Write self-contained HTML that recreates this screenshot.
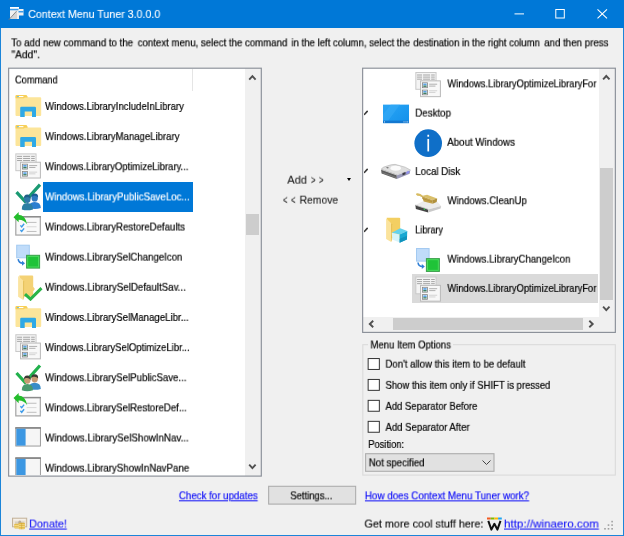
<!DOCTYPE html>
<html>
<head>
<meta charset="utf-8">
<title>Context Menu Tuner 3.0.0.0</title>
<style>
html,body{margin:0;padding:0;}
body{width:624px;height:536px;overflow:hidden;background:#f0f0f0;font-family:"Liberation Sans",sans-serif;font-size:10.500px;color:#000;position:relative;}
.abs{position:absolute;}
#win{position:absolute;left:0;top:0;width:622px;height:534px;border:1px solid #1c85d9;background:#f0f0f0;}
#title{position:absolute;left:0;top:0;width:624px;height:27.900px;background:#0078d7;}
.txt{position:absolute;white-space:nowrap;transform-origin:0 50%;will-change:transform;-webkit-text-stroke:0.2px;}
.list{position:absolute;background:#fff;overflow:hidden;}
.inner{position:absolute;left:0;top:0;right:0;bottom:0;overflow:hidden;}
a{color:#1010f8;text-decoration:underline;}
.cb{position:absolute;width:10.500px;height:10.500px;border:1px solid #333;background:#fff;}
.btn{position:absolute;box-sizing:border-box;border:1px solid #adadad;background:#e1e1e1;}
</style>
</head>
<body>
<div id="win"></div>
<div id="title">
<svg class="abs" style="left:8px;top:6px" width="17" height="16" viewBox="0 0 17 16"><rect x="2" y="1" width="9" height="12" fill="#f1f1f1"/><rect x="2" y="1" width="9" height="1.600" fill="#fff"/><rect x="2" y="2.800" width="9" height="1.500" fill="#3b9ceb"/><rect x="10.500" y="3" width="5" height="6.500" fill="#f1f1f1"/><rect x="10.500" y="5" width="5" height="1.500" fill="#3b9ceb"/><path d="M2 13L9 5V13Z" fill="#d4d4d4"/><path d="M0.800 13.800L8.500 5.200" stroke="#7d7d7d" stroke-width="0.900"/></svg>
<div class="txt" id="t0" style="left:28px;top:7px;font-size:11.2px;line-height:13px;color:#fff;-webkit-text-stroke:0.1px;transform:translate(0.2px,0.92px) scaleX(0.9518);">Context Menu Tuner 3.0.0.0</div>
<svg class="abs" style="left:500px;top:0" width="124" height="28" viewBox="0 0 124 28">
<path d="M14.500 13.900h9.500" stroke="#fff" stroke-width="1"/>
<rect x="55.800" y="9.500" width="8.500" height="8.500" fill="none" stroke="#fff" stroke-width="1"/>
<path d="M97.500 9.300l9.500 9M107 9.300L97.500 18.300" stroke="#fff" stroke-width="1.100"/>
</svg>
</div>

<div class="txt" id="t1" style="left:11px;top:36px;font-size:10.5px;line-height:13px;transform:translate(0.2px,0.36px) scaleX(0.924);">To add new command to the </div><div class="txt" id="t2" style="left:137px;top:36px;font-size:10.5px;line-height:13px;transform:translate(0.7px,0.36px) scaleX(0.9187);">context menu, select the command </div><div class="txt" id="t3" style="left:291px;top:36px;font-size:10.5px;line-height:13px;transform:translate(0.5px,0.36px) scaleX(0.9112);">in the left column, select the </div><div class="txt" id="t4" style="left:413px;top:36px;font-size:10.5px;line-height:13px;transform:translate(0.3px,0.36px) scaleX(0.9068);">destination in the right column </div><div class="txt" id="t5" style="left:544px;top:36px;font-size:10.5px;line-height:13px;transform:translate(0.2px,0.36px) scaleX(0.9242);">and then press</div>
<div class="txt" id="t6" style="left:11px;top:48px;font-size:10.5px;line-height:13px;transform:translate(0.5px,0.26px) scaleX(0.9738);">"Add".</div>

<div class="list" id="left" style="left:9px;top:68px;width:252px;height:408px;">
<div class="inner" style="bottom:1px;right:17px">
<div class="txt" id="t7" style="left:6px;top:5px;font-size:10.5px;line-height:13px;transform:translate(0.0px,0.46px) scaleX(0.8815);">Command</div>
<div class="abs" style="left:183.400px;top:1px;width:1px;height:22px;background:#e5e5e5;"></div>
<div class="abs" style="left:34px;top:113.500px;width:149.600px;height:30px;background:#0078d7;"></div>
<svg class="abs" style="left:6px;top:27px" width="27" height="23" viewBox="-0.2 -0.0 27 23"><path d="M0.300 1.200Q0.300 0 1.500 0H10.500Q12 0 12.200 1.800L12.400 2.300H25Q26 2.300 26 3.300V20Q26 21 25 21H1.300Q0.300 21 0.300 20Z" fill="#fce59a"/><path d="M0.300 1.200Q0.300 0 1.500 0H10.500Q12 0 12.200 1.500L12.400 2.600H9.500L8.800 3.300H0.300Z" fill="#f7cf58"/><rect x="2.600" y="1" width="5.600" height="1.100" fill="#fff"/><rect x="2.200" y="1" width="1.300" height="1.100" fill="#3fb0e8"/><path d="M5 13Q5 11.800 6.200 11.800H19.600Q20.800 11.800 20.800 13V22H16.800V16.600H9.500V22H5Z" fill="#2fa9e6"/></svg>
<div class="txt" id="t8" style="left:36px;top:31px;font-size:10.5px;line-height:13px;transform:translate(0.1px,0.96px) scaleX(0.9112);">Windows.LibraryIncludeInLibrary</div>
<svg class="abs" style="left:6px;top:57px" width="27" height="23" viewBox="-0.2 -0.1 27 23"><path d="M0.300 1.200Q0.300 0 1.500 0H10.500Q12 0 12.200 1.800L12.400 2.300H25Q26 2.300 26 3.300V20Q26 21 25 21H1.300Q0.300 21 0.300 20Z" fill="#fce59a"/><path d="M0.300 1.200Q0.300 0 1.500 0H10.500Q12 0 12.200 1.500L12.400 2.600H9.500L8.800 3.300H0.300Z" fill="#f7cf58"/><rect x="2.600" y="1" width="5.600" height="1.100" fill="#fff"/><rect x="2.200" y="1" width="1.300" height="1.100" fill="#3fb0e8"/><path d="M5 13Q5 11.800 6.200 11.800H19.600Q20.800 11.800 20.800 13V22H16.800V16.600H9.500V22H5Z" fill="#2fa9e6"/></svg>
<div class="txt" id="t9" style="left:36px;top:62px;font-size:10.5px;line-height:13px;transform:translate(0.1px,0.1px) scaleX(0.9095);">Windows.LibraryManageLibrary</div>
<svg class="abs" style="left:6px;top:84px" width="27" height="28" viewBox="-0.3 -0.58 27 28"><rect x="0.550" y="1.300" width="20.200" height="16.800" fill="#f4f4f4" stroke="#c9c9c9"/><g stroke="#a6a6a6" stroke-width="1"><path d="M1.750 3.800h5M7.800 3.800h7M15.850 3.800h3.600M1.750 5.900h5M7.800 5.900h7M15.850 5.900h3.600M1.750 7.950h5M7.800 7.950h7M15.850 7.950h3.600"/></g><rect x="5.250" y="9.650" width="19.850" height="15.800" fill="#f8f8f8" stroke="#b9b9b9"/><rect x="7.200" y="11.600" width="4.900" height="4.900" fill="#f2f6fa" stroke="#858585" stroke-width="0.800"/><rect x="7.200" y="18.900" width="4.900" height="4.700" fill="#f2f6fa" stroke="#858585" stroke-width="0.800"/><rect x="8" y="12.400" width="3.300" height="1.700" fill="#5aa2e6"/><rect x="8" y="14.300" width="3.300" height="1.400" fill="#3f7f62"/><rect x="8" y="19.700" width="3.300" height="1.600" fill="#5aa2e6"/><rect x="8" y="21.500" width="3.300" height="1.300" fill="#3f7f62"/><g stroke-width="0.900"><path d="M13.850 13h8M13.850 14.900h6.300" stroke="#a8a8a8"/><path d="M13.850 19.550h8M13.850 21.250h6.300" stroke="#cfcfcf"/></g></svg>
<div class="txt" id="t10" style="left:36px;top:92px;font-size:10.5px;line-height:13px;transform:translate(0.1px,0.24px) scaleX(0.9006);">Windows.LibraryOptimizeLibrary...</div>
<svg class="abs" style="left:6px;top:113px" width="28" height="32" viewBox="0 -0.82 28 32"><path d="M1.500 10.300L10 19.600L25 2.800" fill="none" stroke="#1a9a72" stroke-width="3.200"/><g transform="translate(0,-1.200)"><path d="M13.800 27.500Q13.800 21.300 19.500 21.300Q25.800 21.300 25.800 27.500Q20 29.300 13.800 27.500Z" fill="#2a7fd0"/><ellipse cx="19.700" cy="17.300" rx="3.200" ry="3.700" fill="#2f79c0"/><path d="M16.300 17Q16.100 12.800 19.800 12.800Q23.400 12.800 23.100 17Q21.500 14.800 18.500 15.300Q16.800 15.500 16.300 17Z" fill="#1c5c96"/><path d="M6.800 28.800Q6.800 22.500 12.300 22.500Q18 22.500 18 28.800Q12 30.600 6.800 28.800Z" fill="#2b7fa3"/><ellipse cx="12.300" cy="18.600" rx="3.200" ry="3.800" fill="#2f79a8"/><path d="M8.900 18.500Q8.600 14 12.300 14Q15.900 14 15.700 18.500Q14 16 11 16.600Q9.500 16.800 8.900 18.500Z" fill="#1f5f86"/></g></svg>
<div class="txt" id="t11" style="left:36px;top:122px;font-size:10.5px;line-height:13px;color:#fff;transform:translate(0.1px,0.38px) scaleX(0.9273);">Windows.LibraryPublicSaveLoc...</div>
<svg class="abs" style="left:4px;top:144px" width="30" height="25" viewBox="0 -0.06 30 25"><rect x="2.800" y="4.600" width="24.500" height="18.400" fill="#f9f9f9" stroke="#a3a3a3" stroke-width="1.200"/><rect x="2.200" y="4" width="25.700" height="1.400" fill="#8c8c8c"/><g stroke-width="0.800"><path d="M13.700 10.350h9.800M13.700 19.400h9.800" stroke="#aeaeae"/><path d="M13.700 14.700h9.800" stroke="#cfcfcf"/></g><path d="M7.400 13.300l1.300 1.500l2.400-3.100M7.400 17.900l1.300 1.500l2.400-3.100" fill="none" stroke="#3d9be9" stroke-width="1.400"/><path d="M0.500 5.150L5.650 0L5.650 2.600Q12.500 3.200 14.300 12.400Q11.300 7.600 5.650 7.600L5.650 10.300Z" fill="#24bd2c"/></svg>
<div class="txt" id="t12" style="left:36px;top:152px;font-size:10.5px;line-height:13px;transform:translate(0.1px,0.52px) scaleX(0.9143);">Windows.LibraryRestoreDefaults</div>
<svg class="abs" style="left:7px;top:176px" width="25" height="25" viewBox="-0.2 -0.7 25 25"><rect x="0.500" y="0.500" width="12.600" height="12.600" fill="#c0dcfa" stroke="#a3caf1"/><rect x="10.400" y="10.600" width="13" height="12.800" fill="#1fc338" stroke="#3c9f4c" stroke-width="1"/><rect x="11.500" y="11.700" width="10.800" height="10.600" fill="none" stroke="#4fdc62" stroke-width="0.900"/><path d="M2 14.500Q2.500 18.500 6.500 18.500" fill="none" stroke="#2f7fd6" stroke-width="1.600"/><path d="M5.800 16L8.800 18.600L5.800 21Z" fill="#2f7fd6"/></svg>
<div class="txt" id="t13" style="left:36px;top:182px;font-size:10.5px;line-height:13px;transform:translate(0.1px,0.66px) scaleX(0.9189);">Windows.LibrarySelChangeIcon</div>
<svg class="abs" style="left:8px;top:206px" width="27" height="27" viewBox="0 -0.8 27 27"><path d="M2.200 0.800H15.200Q16.200 0.800 16.200 1.800V12L17.900 14.200L16.200 16.500V22H6.200Z" fill="#f4d275"/><path d="M1.100 1.300L6.200 5.800V25.200L1.100 22Z" fill="#fbe4a0"/><path d="M6.200 5.800V25.200L7.100 23V6.600Z" fill="#e3bf58"/><path d="M8 19.300L13.500 24.300L24.500 13.300" fill="none" stroke="#2ab548" stroke-width="3"/></svg>
<div class="txt" id="t14" style="left:36px;top:212px;font-size:10.5px;line-height:13px;transform:translate(0.1px,0.8px) scaleX(0.9249);">Windows.LibrarySelDefaultSav...</div>
<svg class="abs" style="left:6px;top:238px" width="27" height="23" viewBox="-0.2 -0.0 27 23"><path d="M0.300 1.200Q0.300 0 1.500 0H10.500Q12 0 12.200 1.800L12.400 2.300H25Q26 2.300 26 3.300V20Q26 21 25 21H1.300Q0.300 21 0.300 20Z" fill="#fce59a"/><path d="M0.300 1.200Q0.300 0 1.500 0H10.500Q12 0 12.200 1.500L12.400 2.600H9.500L8.800 3.300H0.300Z" fill="#f7cf58"/><rect x="2.600" y="1" width="5.600" height="1.100" fill="#fff"/><rect x="2.200" y="1" width="1.300" height="1.100" fill="#3fb0e8"/><path d="M5 13Q5 11.800 6.200 11.800H19.600Q20.800 11.800 20.800 13V22H16.800V16.600H9.500V22H5Z" fill="#2fa9e6"/></svg>
<div class="txt" id="t15" style="left:36px;top:242px;font-size:10.5px;line-height:13px;transform:translate(0.1px,0.94px) scaleX(0.918);">Windows.LibrarySelManageLibr...</div>
<svg class="abs" style="left:6px;top:265px" width="27" height="28" viewBox="-0.3 -0.42 27 28"><rect x="0.550" y="1.300" width="20.200" height="16.800" fill="#f4f4f4" stroke="#c9c9c9"/><g stroke="#a6a6a6" stroke-width="1"><path d="M1.750 3.800h5M7.800 3.800h7M15.850 3.800h3.600M1.750 5.900h5M7.800 5.900h7M15.850 5.900h3.600M1.750 7.950h5M7.800 7.950h7M15.850 7.950h3.600"/></g><rect x="5.250" y="9.650" width="19.850" height="15.800" fill="#f8f8f8" stroke="#b9b9b9"/><rect x="7.200" y="11.600" width="4.900" height="4.900" fill="#f2f6fa" stroke="#858585" stroke-width="0.800"/><rect x="7.200" y="18.900" width="4.900" height="4.700" fill="#f2f6fa" stroke="#858585" stroke-width="0.800"/><rect x="8" y="12.400" width="3.300" height="1.700" fill="#5aa2e6"/><rect x="8" y="14.300" width="3.300" height="1.400" fill="#3f7f62"/><rect x="8" y="19.700" width="3.300" height="1.600" fill="#5aa2e6"/><rect x="8" y="21.500" width="3.300" height="1.300" fill="#3f7f62"/><g stroke-width="0.900"><path d="M13.850 13h8M13.850 14.900h6.300" stroke="#a8a8a8"/><path d="M13.850 19.550h8M13.850 21.250h6.300" stroke="#cfcfcf"/></g></svg>
<div class="txt" id="t16" style="left:36px;top:273px;font-size:10.5px;line-height:13px;transform:translate(0.1px,0.08px) scaleX(0.9037);">Windows.LibrarySelOptimizeLibr...</div>
<svg class="abs" style="left:6px;top:294px" width="28" height="32" viewBox="0 -0.66 28 32"><path d="M1.500 10.300L10 19.600L25 2.800" fill="none" stroke="#22b14c" stroke-width="3.200"/><g transform="translate(0,-1.200)"><path d="M13.800 27.500Q13.800 21.300 19.500 21.300Q25.800 21.300 25.800 27.500Q20 29.300 13.800 27.500Z" fill="#3a8dc8"/><ellipse cx="19.700" cy="17.300" rx="3.200" ry="3.700" fill="#c79a72"/><path d="M16.300 17Q16.100 12.800 19.800 12.800Q23.400 12.800 23.100 17Q21.500 14.800 18.500 15.300Q16.800 15.500 16.300 17Z" fill="#3a3a34"/><path d="M6.800 28.800Q6.800 22.500 12.300 22.500Q18 22.500 18 28.800Q12 30.600 6.800 28.800Z" fill="#4a9a6e"/><ellipse cx="12.300" cy="18.600" rx="3.200" ry="3.800" fill="#c79a72"/><path d="M8.900 18.500Q8.600 14 12.300 14Q15.900 14 15.700 18.500Q14 16 11 16.600Q9.500 16.800 8.900 18.500Z" fill="#3a3a34"/></g></svg>
<div class="txt" id="t17" style="left:36px;top:303px;font-size:10.5px;line-height:13px;transform:translate(0.1px,0.22px) scaleX(0.9171);">Windows.LibrarySelPublicSave...</div>
<svg class="abs" style="left:4px;top:324px" width="30" height="25" viewBox="0 -0.9 30 25"><rect x="2.800" y="4.600" width="24.500" height="18.400" fill="#f9f9f9" stroke="#a3a3a3" stroke-width="1.200"/><rect x="2.200" y="4" width="25.700" height="1.400" fill="#8c8c8c"/><g stroke-width="0.800"><path d="M13.700 10.350h9.800M13.700 19.400h9.800" stroke="#aeaeae"/><path d="M13.700 14.700h9.800" stroke="#cfcfcf"/></g><path d="M7.400 13.300l1.300 1.500l2.400-3.100M7.400 17.900l1.300 1.500l2.400-3.100" fill="none" stroke="#3d9be9" stroke-width="1.400"/><path d="M0.500 5.150L5.650 0L5.650 2.600Q12.500 3.200 14.300 12.400Q11.300 7.600 5.650 7.600L5.650 10.300Z" fill="#24bd2c"/></svg>
<div class="txt" id="t18" style="left:36px;top:333px;font-size:10.5px;line-height:13px;transform:translate(0.1px,0.36px) scaleX(0.9163);">Windows.LibrarySelRestoreDef...</div>
<svg class="abs" style="left:6px;top:359px" width="27" height="21" viewBox="-0.3 -0.24 27 21"><rect x="0.500" y="0.500" width="24.600" height="18.300" fill="#f6f6f6" stroke="#909090" stroke-width="0.900"/><rect x="0" y="0" width="25.600" height="1.500" fill="#808080"/><rect x="1" y="1.500" width="9.300" height="16.900" fill="#3c97e2"/></svg>
<div class="txt" id="t19" style="left:36px;top:363px;font-size:10.5px;line-height:13px;transform:translate(0.1px,0.5px) scaleX(0.9297);">Windows.LibrarySelShowInNav...</div>
<svg class="abs" style="left:6px;top:389px" width="27" height="21" viewBox="-0.3 -0.38 27 21"><rect x="0.500" y="0.500" width="24.600" height="18.300" fill="#f6f6f6" stroke="#909090" stroke-width="0.900"/><rect x="0" y="0" width="25.600" height="1.500" fill="#808080"/><rect x="1" y="1.500" width="9.300" height="16.900" fill="#3c97e2"/></svg>
<div class="txt" id="t20" style="left:36px;top:393px;font-size:10.5px;line-height:13px;transform:translate(0.1px,0.64px) scaleX(0.9247);">Windows.LibraryShowInNavPane</div>
</div>
<div class="inner">
<div class="abs" style="left:236.300px;top:0;width:16px;height:409px;background:#f0f0f0;"></div>
<div class="abs" style="left:237px;top:145.600px;width:13px;height:21.100px;background:#cdcdcd;"></div>
<svg class="abs" style="left:235px;top:0" width="17" height="409" viewBox="0 0 17 409">
<path d="M5.200 11.600L8.400 8.200L11.600 11.600" fill="none" stroke="#505050" stroke-width="1.900"/>
<path d="M5.200 396.700L8.400 400.100L11.600 396.700" fill="none" stroke="#505050" stroke-width="1.900"/>
</svg>
</div>
</div>

<div class="txt" id="t21" style="left:287px;top:172px;font-size:11.6px;line-height:13px;color:#1c1c1c;-webkit-text-stroke:0.1px;transform:translate(0.3px,0.68px) scaleX(0.9496);">Add </div><div class="txt" id="t22" style="left:311px;top:172px;font-size:11.6px;line-height:13px;color:#1c1c1c;-webkit-text-stroke:0.1px;transform:translate(0.0px,0.68px) scaleX(0.6783);">&gt;</div><div class="txt" id="t23" style="left:319px;top:172px;font-size:11.6px;line-height:13px;color:#1c1c1c;-webkit-text-stroke:0.1px;transform:translate(0.0px,0.68px) scaleX(0.6636);">&gt;</div>
<div class="abs" style="left:346.600px;top:177.800px;width:0;height:0;border-left:2.900px solid transparent;border-right:2.900px solid transparent;border-top:3px solid #000;"></div>
<div class="txt" id="t24" style="left:283px;top:192px;font-size:11.6px;line-height:13px;color:#1c1c1c;-webkit-text-stroke:0.1px;transform:translate(0.0px,0.68px) scaleX(0.6488);">&lt;</div><div class="txt" id="t25" style="left:291px;top:192px;font-size:11.6px;line-height:13px;color:#1c1c1c;-webkit-text-stroke:0.1px;transform:translate(0.0px,0.68px) scaleX(0.6488);">&lt; </div><div class="txt" id="t26" style="left:299px;top:192px;font-size:11.6px;line-height:13px;color:#1c1c1c;-webkit-text-stroke:0.1px;transform:translate(0.6px,0.68px) scaleX(0.8918);">Remove</div>

<div class="list" id="right" style="left:363px;top:68px;width:252px;height:264px;">
<div class="inner">
<svg class="abs" style="left:52px;top:3px" width="27" height="28" viewBox="-0.3 -0.2 27 28"><rect x="0.550" y="1.300" width="20.200" height="16.800" fill="#f4f4f4" stroke="#c9c9c9"/><g stroke="#a6a6a6" stroke-width="1"><path d="M1.750 3.800h5M7.800 3.800h7M15.850 3.800h3.600M1.750 5.900h5M7.800 5.900h7M15.850 5.900h3.600M1.750 7.950h5M7.800 7.950h7M15.850 7.950h3.600"/></g><rect x="5.250" y="9.650" width="19.850" height="15.800" fill="#f8f8f8" stroke="#b9b9b9"/><rect x="7.200" y="11.600" width="4.900" height="4.900" fill="#f2f6fa" stroke="#858585" stroke-width="0.800"/><rect x="7.200" y="18.900" width="4.900" height="4.700" fill="#f2f6fa" stroke="#858585" stroke-width="0.800"/><rect x="8" y="12.400" width="3.300" height="1.700" fill="#5aa2e6"/><rect x="8" y="14.300" width="3.300" height="1.400" fill="#3f7f62"/><rect x="8" y="19.700" width="3.300" height="1.600" fill="#5aa2e6"/><rect x="8" y="21.500" width="3.300" height="1.300" fill="#3f7f62"/><g stroke-width="0.900"><path d="M13.850 13h8M13.850 14.900h6.300" stroke="#a8a8a8"/><path d="M13.850 19.550h8M13.850 21.250h6.300" stroke="#cfcfcf"/></g></svg>
<div class="txt" id="t27" style="left:84px;top:9px;font-size:10.5px;line-height:13px;transform:translate(0.4px,0.36px) scaleX(0.8922);">Windows.LibraryOptimizeLibraryFor</div>
<svg class="abs" style="left:1px;top:41.7px" width="6" height="6" viewBox="0 0 6 6"><path d="M0.600 4.300L3.200 1.400" fill="none" stroke="#3c3c3c" stroke-width="1.600" stroke-linecap="round"/></svg>
<svg class="abs" style="left:20px;top:36px" width="27" height="20" viewBox="0 -0.62 27 20"><defs><linearGradient id="dg" x1="0" y1="0" x2="1" y2="1"><stop offset="0" stop-color="#2aa4f4"/><stop offset="0.500" stop-color="#1e9bf0"/><stop offset="1" stop-color="#1490ea"/></linearGradient></defs><rect x="0" y="0" width="26" height="18.500" fill="url(#dg)"/><path d="M8 0L17 0L5 16.500L0 16.500L0 10Z" fill="#3fb0f8" opacity="0.450"/><rect x="0" y="16" width="26" height="2.500" fill="#1378d0"/><rect x="1" y="16.800" width="1" height="1" fill="#cfe6fa"/><rect x="20.500" y="16.800" width="1" height="1" fill="#cfe6fa"/><rect x="22.500" y="16.800" width="1" height="1" fill="#cfe6fa"/><rect x="24.200" y="16.800" width="1" height="1" fill="#cfe6fa"/></svg>
<div class="txt" id="t28" style="left:52px;top:38px;font-size:10.5px;line-height:13px;transform:translate(0.3px,0.58px) scaleX(0.9239);">Desktop</div>
<svg class="abs" style="left:51px;top:61px" width="29" height="29" viewBox="-0.2 -0.14 29 29"><circle cx="14" cy="14" r="13.800" fill="#0f6fc8"/><rect x="13.200" y="9.800" width="1.700" height="12.500" fill="#fff"/><rect x="13.200" y="5.600" width="1.700" height="2" fill="#fff"/></svg>
<div class="txt" id="t29" style="left:84px;top:67px;font-size:10.5px;line-height:13px;transform:translate(0.2px,0.8px) scaleX(0.9294);">About Windows</div>
<svg class="abs" style="left:1px;top:100.2px" width="6" height="6" viewBox="0 0 6 6"><path d="M0.600 4.300L3.200 1.400" fill="none" stroke="#3c3c3c" stroke-width="1.600" stroke-linecap="round"/></svg>
<svg class="abs" style="left:18px;top:95px" width="31" height="17" viewBox="0 -0.76 31 17"><path d="M0 5.600Q1.500 3.200 6.200 2.200Q10 0.700 14.100 0.600L24.200 3.400L29.300 6.200L15.800 11.200Z" fill="#dedede" stroke="#a2a2a2" stroke-width="0.500"/><ellipse cx="14.700" cy="4.500" rx="5.200" ry="2.400" fill="#fbfbfb"/><path d="M6.200 3.300l1.800 0.700l-1.200 0.700l-1.800-0.700z" fill="#707070"/><path d="M0 5.600L15.800 11.200L15.800 15.300L0.600 9.700Z" fill="#5c5c5c"/><path d="M0 5.600L15.800 11.200" stroke="#c9c9c9" stroke-width="1" fill="none"/><path d="M1.500 8.900L15 13.800" stroke="#8f8f8f" stroke-width="0.600" fill="none"/><path d="M15.800 11.200L29.300 6.200L28.700 10.100L15.800 15.300Z" fill="#9a9ab8"/><path d="M15.800 11.200L29.300 6.200" stroke="#e2e2e2" stroke-width="0.800" fill="none"/><path d="M21.500 9.300L24.500 8.200L24.500 10.600L21.500 11.800Z" fill="#3d3d46"/><path d="M25.500 8L28.300 7L28.100 9.300L25.500 10.300Z" fill="#8d8df0"/></svg>
<div class="txt" id="t30" style="left:52px;top:97px;font-size:10.5px;line-height:13px;transform:translate(0.3px,0.02px) scaleX(0.9249);">Local Disk</div>
<svg class="abs" style="left:51px;top:124px" width="28" height="21" viewBox="-0.8 -0.58 28 21"><path d="M0.500 12.500L8.950 8.400L22.400 9.200L26.400 13.400L13.400 16.800Z" fill="#ececec"/><path d="M0.500 12.500L13.400 16.800L13.400 19.900L1.100 16.300Z" fill="#454545"/><path d="M0.500 12.500L13.400 16.800" stroke="#bdbdbd" stroke-width="0.800" fill="none"/><path d="M13.400 16.800L26.400 13.400L25.800 16L13.400 19.900Z" fill="#c9c9c9"/><rect x="8.900" y="16" width="1.400" height="1.300" fill="#2fd04a"/><path d="M1.200 1.800Q1 0.600 3 0.700Q6.200 1 7.300 2.600L8.500 3.600L6.500 4.300L5 3.300Q2 3.300 1.200 1.800Z" fill="#d8bc62"/><path d="M6.700 3.300L12.300 2.200L22.400 5.800L17.400 7.300Z" fill="#d9bf6a"/><path d="M6.700 3.300L17.400 7.300L17.900 11.200L8.950 8.900Z" fill="#c3a24a"/><path d="M7.500 5.800L17.600 9.200" stroke="#a98a38" stroke-width="0.700" fill="none"/><path d="M17.400 7.300L22.400 5.800L21.900 9.500L17.900 11.200Z" fill="#b0903c"/></svg>
<div class="txt" id="t31" style="left:84px;top:126px;font-size:10.5px;line-height:13px;transform:translate(0.4px,0.24px) scaleX(0.9192);">Windows.CleanUp</div>
<svg class="abs" style="left:1px;top:158.6px" width="6" height="6" viewBox="0 0 6 6"><path d="M0.600 4.300L3.200 1.400" fill="none" stroke="#3c3c3c" stroke-width="1.600" stroke-linecap="round"/></svg>
<svg class="abs" style="left:22px;top:149px" width="23" height="27" viewBox="-0.8 -0.35 23 27"><path d="M0.900 0.300H13.400Q14.400 0.300 14.400 1.300V21H5.400Z" fill="#f3cf62"/><path d="M0.300 0.800L5.400 5.900V24.600L0.300 21.600Z" fill="#fbe39c"/><path d="M5.400 5.900V24.600L6.300 22.500V6.800Z" fill="#e3bd52"/><path d="M5.950 15.400L14.400 10.900L21.500 13.700L13.800 17.100Z" fill="#63d2ec"/><path d="M5.950 15.400L13.800 17.100V25.200L6.500 22.200Z" fill="#d6f4fa"/><path d="M13.800 17.100L21.500 13.700L21.100 22.200L13.800 25.300Z" fill="#18a8d2"/><path d="M13.800 21.500L21.300 18.300L21.100 22.200L13.800 25.300Z" fill="#1093bd"/></svg>
<div class="txt" id="t32" style="left:52px;top:155px;font-size:10.5px;line-height:13px;transform:translate(0.3px,0.46px) scaleX(0.8658);">Library</div>
<svg class="abs" style="left:53px;top:180px" width="25" height="25" viewBox="0 -0.02 25 25"><rect x="0.500" y="0.500" width="12.600" height="12.600" fill="#c0dcfa" stroke="#a3caf1"/><rect x="10.400" y="10.600" width="13" height="12.800" fill="#1fc338" stroke="#3c9f4c" stroke-width="1"/><rect x="11.500" y="11.700" width="10.800" height="10.600" fill="none" stroke="#4fdc62" stroke-width="0.900"/><path d="M2 14.500Q2.500 18.500 6.500 18.500" fill="none" stroke="#2f7fd6" stroke-width="1.600"/><path d="M5.800 16L8.800 18.600L5.800 21Z" fill="#2f7fd6"/></svg>
<div class="txt" id="t33" style="left:84px;top:184px;font-size:10.5px;line-height:13px;transform:translate(0.4px,0.68px) scaleX(0.9163);">Windows.LibraryChangeIcon</div>
<div class="abs" style="left:48.5px;top:206.2px;width:186.5px;height:28.500px;background:#dadada"></div>
<svg class="abs" style="left:52px;top:207px" width="27" height="28" viewBox="-0.3 -0.7 27 28"><rect x="0.550" y="1.300" width="20.200" height="16.800" fill="#f4f4f4" stroke="#c9c9c9"/><g stroke="#a6a6a6" stroke-width="1"><path d="M1.750 3.800h5M7.800 3.800h7M15.850 3.800h3.600M1.750 5.900h5M7.800 5.900h7M15.850 5.900h3.600M1.750 7.950h5M7.800 7.950h7M15.850 7.950h3.600"/></g><rect x="5.250" y="9.650" width="19.850" height="15.800" fill="#f8f8f8" stroke="#b9b9b9"/><rect x="7.200" y="11.600" width="4.900" height="4.900" fill="#f2f6fa" stroke="#858585" stroke-width="0.800"/><rect x="7.200" y="18.900" width="4.900" height="4.700" fill="#f2f6fa" stroke="#858585" stroke-width="0.800"/><rect x="8" y="12.400" width="3.300" height="1.700" fill="#5aa2e6"/><rect x="8" y="14.300" width="3.300" height="1.400" fill="#3f7f62"/><rect x="8" y="19.700" width="3.300" height="1.600" fill="#5aa2e6"/><rect x="8" y="21.500" width="3.300" height="1.300" fill="#3f7f62"/><g stroke-width="0.900"><path d="M13.850 13h8M13.850 14.900h6.300" stroke="#a8a8a8"/><path d="M13.850 19.550h8M13.850 21.250h6.300" stroke="#cfcfcf"/></g></svg>
<div class="txt" id="t34" style="left:84px;top:213px;font-size:10.5px;line-height:13px;transform:translate(0.4px,0.9px) scaleX(0.8922);">Windows.LibraryOptimizeLibraryFor</div>
<div class="abs" style="left:236.200px;top:0;width:16px;height:249px;background:#f0f0f0;"></div>
<div class="abs" style="left:236.600px;top:100px;width:13.400px;height:131.500px;background:#cdcdcd;"></div>
<div class="abs" style="left:0;top:248.500px;width:253px;height:16px;background:#f0f0f0;"></div>
<div class="abs" style="left:30.300px;top:250.200px;width:189.700px;height:12px;background:#cdcdcd;"></div>
<svg class="abs" style="left:0;top:0" width="253" height="265" viewBox="0 0 253 265">
<path d="M240.100 11.400l3.200-3.400l3.200 3.400" fill="none" stroke="#505050" stroke-width="1.900"/>
<path d="M240.100 238.700l3.200 3.400l3.200-3.400" fill="none" stroke="#505050" stroke-width="1.900"/>
<path d="M10.200 252.800l-3.400 3.200l3.400 3.200" fill="none" stroke="#505050" stroke-width="1.900"/>
<path d="M226.300 252.800l3.400 3.200l-3.400 3.200" fill="none" stroke="#505050" stroke-width="1.900"/>
</svg>
</div>
</div>

<svg class="abs" style="left:0;top:0" width="624" height="536" viewBox="0 0 624 536"><rect x="362.800" y="344.700" width="252.500" height="130.400" fill="none" stroke="#dadada" stroke-width="1.100"/><rect x="365.600" y="453.700" width="128.400" height="17.600" fill="#e1e1e1" stroke="#adadad" stroke-width="1.100"/><rect x="268.650" y="486.300" width="87" height="17.800" fill="#e1e1e1" stroke="#adadad" stroke-width="1.100"/></svg>
<div class="abs" style="left:368px;top:340px;width:85px;height:10px;background:#f0f0f0;"></div>
<div class="txt" id="t35" style="left:370px;top:338px;font-size:10.5px;line-height:13px;transform:translate(0.5px,0.46px) scaleX(0.9062);">Menu Item Options</div>
<svg class="abs" style="left:366px;top:356px" width="16" height="16" viewBox="0 0 16 16"><rect x="2.150" y="2.55" width="11.200" height="10.900" fill="#fff" stroke="#333" stroke-width="1"/></svg><div class="txt" id="t36" style="left:385px;top:357px;font-size:10.5px;line-height:13px;transform:translate(0.5px,0.66px) scaleX(0.9105);">Don't allow this item to be default</div>
<svg class="abs" style="left:366px;top:376px" width="16" height="16" viewBox="0 0 16 16"><rect x="2.150" y="3.45" width="11.200" height="10.900" fill="#fff" stroke="#333" stroke-width="1"/></svg><div class="txt" id="t37" style="left:385px;top:378px;font-size:10.5px;line-height:13px;transform:translate(0.5px,0.86px) scaleX(0.9038);">Show this item only if SHIFT is pressed</div>
<svg class="abs" style="left:366px;top:397px" width="16" height="16" viewBox="0 0 16 16"><rect x="2.150" y="3.35" width="11.200" height="10.900" fill="#fff" stroke="#333" stroke-width="1"/></svg><div class="txt" id="t38" style="left:385px;top:399px;font-size:10.5px;line-height:13px;transform:translate(0.5px,0.86px) scaleX(0.9037);">Add Separator Before</div>
<svg class="abs" style="left:366px;top:418px" width="16" height="16" viewBox="0 0 16 16"><rect x="2.150" y="3.35" width="11.200" height="10.900" fill="#fff" stroke="#333" stroke-width="1"/></svg><div class="txt" id="t39" style="left:385px;top:420px;font-size:10.5px;line-height:13px;transform:translate(0.5px,0.86px) scaleX(0.9118);">Add Separator After</div>
<div class="txt" id="t40" style="left:368px;top:437px;font-size:10.5px;line-height:13px;transform:translate(0.3px,0.96px) scaleX(0.8888);">Position:</div>
<div class="txt" id="t41" style="left:368px;top:456px;font-size:10.5px;line-height:13px;transform:translate(0.8px,0.36px) scaleX(0.9192);">Not specified</div>
<svg class="abs" style="left:481.500px;top:460px" width="9" height="6" viewBox="0 0 9 6"><path d="M0.500 0.500l4 4l4-4" fill="none" stroke="#444" stroke-width="1"/></svg>

<div class="txt" id="t42" style="left:178px;top:489px;font-size:10.5px;line-height:13px;transform:translate(0.9px,0.26px) scaleX(0.9247);"><a>Check for updates</a></div>
<div class="txt" id="t43" style="left:290px;top:489px;font-size:10.5px;line-height:13px;transform:translate(0.3px,0.36px) scaleX(0.9014);">Settings...</div>
<div class="txt" id="t44" style="left:364px;top:489px;font-size:10.5px;line-height:13px;transform:translate(0.9px,0.36px) scaleX(0.9347);"><a>How does Context Menu Tuner work?</a></div>

<svg class="abs" style="left:12px;top:517px" width="17" height="14" viewBox="0 0 17 14"><rect x="0.500" y="1.200" width="14.200" height="8.600" fill="#eee6da" stroke="#c3b29a" stroke-width="1"/><rect x="1.800" y="2.300" width="11.600" height="1" fill="#f8f4ee"/><rect x="3" y="4.500" width="3.500" height="2.200" fill="#d8cfc0"/><rect x="9.500" y="4.500" width="3" height="2.200" fill="#d8cfc0"/><ellipse cx="7.800" cy="5.500" rx="1.600" ry="2" fill="#b9ad9c"/><rect x="2.300" y="6.800" width="4.600" height="4.800" rx="0.800" fill="#e2bb4c"/><rect x="6.500" y="5.800" width="6.400" height="6.400" rx="0.900" fill="#e0b644"/><rect x="2.300" y="8" width="4.600" height="0.900" fill="#f3dc8a"/><rect x="2.300" y="9.800" width="4.600" height="0.800" fill="#f3dc8a"/><rect x="6.500" y="7.300" width="6.400" height="0.900" fill="#f3dc8a"/><rect x="6.500" y="9.100" width="6.400" height="0.900" fill="#f3dc8a"/><rect x="6.500" y="10.800" width="6.400" height="0.700" fill="#f3dc8a"/><rect x="9.200" y="5.800" width="0.900" height="6.400" fill="#cfa236" opacity="0.600"/></svg>
<div class="txt" id="t45" style="left:29px;top:517px;font-size:11.8px;line-height:13px;-webkit-text-stroke:0.1px;transform:translate(0.2px,0.51px) scaleX(0.9098);"><a>Donate!</a></div>
<div class="txt" id="t46" style="left:364px;top:517px;font-size:11.8px;line-height:13px;-webkit-text-stroke:0.1px;transform:translate(0.4px,0.51px) scaleX(0.9188);">Get more cool stuff here:</div>
<svg class="abs" style="left:487px;top:517px" width="15" height="14" viewBox="0 0 15 14">
<rect x="0" y="0.500" width="3.700" height="2" fill="#f25a22"/><rect x="3.700" y="0.500" width="3.700" height="2" fill="#7fba00"/><rect x="7.400" y="0.500" width="3.700" height="2" fill="#ffb900"/><rect x="11.100" y="0.500" width="3.700" height="2" fill="#1ea4ef"/>
<path d="M1.300 3.800L4.400 12.600L7.400 6.800L10.400 12.600L13.500 3.800" fill="none" stroke="#111" stroke-width="2" stroke-linejoin="round"/>
</svg>
<div class="txt" id="t47" style="left:504px;top:517px;font-size:11.8px;line-height:13px;-webkit-text-stroke:0.1px;transform:translate(0.0px,0.51px) scaleX(0.9845);"><a>http://winaero.com</a></div>
<svg class="abs" style="left:603px;top:519px" width="12" height="12" viewBox="0 0 12 12">
<g fill="#a0a0a0"><rect x="8.300" y="1.800" width="1.600" height="1.600"/><rect x="4.700" y="5.300" width="1.600" height="1.600"/><rect x="8.300" y="5.300" width="1.600" height="1.600"/><rect x="1.200" y="9" width="1.600" height="1.600"/><rect x="4.700" y="9" width="1.600" height="1.600"/><rect x="8.300" y="9" width="1.600" height="1.600"/></g>
</svg>
<svg class="abs" style="left:0;top:0" width="624" height="536" viewBox="0 0 624 536"><rect x="8.650" y="68.200" width="252.650" height="407.900" fill="none" stroke="#8a8f98" stroke-width="1.150"/><rect x="362.650" y="68.200" width="252.700" height="264.200" fill="none" stroke="#8a8f98" stroke-width="1.150"/></svg>
</body>
</html>
